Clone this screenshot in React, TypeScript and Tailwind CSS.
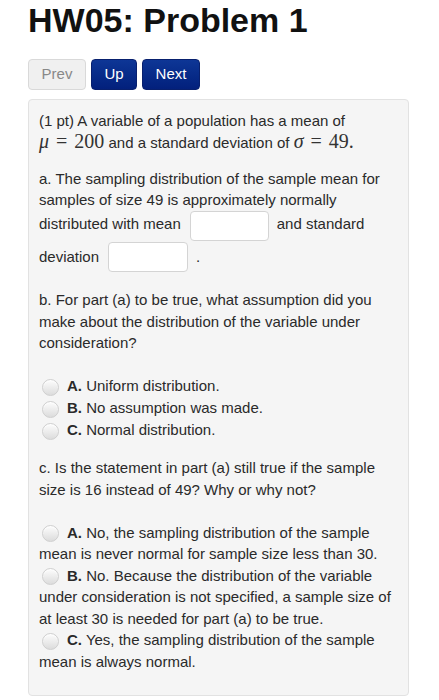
import React from "react";

const Radio = () => (
  <span className="inline-block w-[17px] h-[17px] rounded-full align-middle ml-[3px] mr-[8px] border border-[#cfcfcf] bg-gradient-to-b from-[#fdfdfd] to-[#dcdcdc] shadow-[inset_0_1px_1px_rgba(255,255,255,0.9)]" />
);

const Box = ({ w }: { w: string }) => (
  <div className={`${w} h-[30px] shrink-0 rounded-[4px] border border-[#d4d4d4] bg-white`} />
);

export default function App() {
  const math = "font-['Liberation_Serif',serif] text-[20px] leading-[0px] text-[#333]";
  return (
    <div className="bg-white min-h-[700px] pl-[28px] pr-[30px] pt-[1px] font-['Liberation_Sans',Arial,sans-serif]">
      <h1 className="text-[34px] leading-[38px] font-bold text-[#111]">HW05: Problem 1</h1>
      <div className="mt-[20px] flex gap-[5px]">
        <button className="h-[31px] w-[58px] rounded-[4px] border border-[#d9d9d9] bg-[#f0f0f0] text-[15px] text-[#888]">Prev</button>
        <button className="h-[31px] w-[46px] rounded-[4px] border border-[#08206e] bg-gradient-to-b from-[#0e3696] to-[#03207c] text-[15px] text-white">Up</button>
        <button className="h-[31px] w-[58px] rounded-[4px] border border-[#08206e] bg-gradient-to-b from-[#0e3696] to-[#03207c] text-[15px] text-white">Next</button>
      </div>
      <div className="mt-[9px] w-[381px] rounded-[4px] border border-[#e2e2e2] bg-[#f5f5f5] pl-[10px] pr-[6px] pt-[10px] pb-[23px] text-[15px] leading-[21.5px] text-[#2a2a2a] whitespace-nowrap">
        <p>
          (1 pt) A variable of a population has a mean of
          <br />
          <span className={math}>
            <i>μ</i>
            <span className="mx-[7px]">=</span>200
          </span>{" "}
          and a standard deviation of{" "}
          <span className={math}>
            <i>σ</i>
            <span className="mx-[7px]">=</span>49.
          </span>
        </p>

        <div className="mt-[14.5px]">
          <p>
            a. The sampling distribution of the sample mean for
            <br />
            samples of size 49 is approximately normally
          </p>
          <div className="flex items-start h-[31px]">
            <span className="mt-[2.5px]">distributed with mean</span>
            <div className="ml-[9px] mt-[0.5px]">
              <Box w="w-[79px]" />
            </div>
            <span className="mt-[2.5px] ml-[8px]">and standard</span>
          </div>
          <div className="flex items-start h-[31px]">
            <span className="mt-[4.5px]">deviation</span>
            <div className="ml-[9px] mt-[0.5px]">
              <Box w="w-[80px]" />
            </div>
            <span className="mt-[4.5px] ml-[8px]">.</span>
          </div>
        </div>

        <p className="mt-[16.5px]">
          b. For part (a) to be true, what assumption did you
          <br />
          make about the distribution of the variable under
          <br />
          consideration?
        </p>

        <div className="mt-[21.5px]">
          <div className="leading-[22px]">
            <Radio />
            <b>A.</b> Uniform distribution.
          </div>
          <div className="leading-[22px]">
            <Radio />
            <b>B.</b> No assumption was made.
          </div>
          <div className="leading-[22px]">
            <Radio />
            <b>C.</b> Normal distribution.
          </div>
        </div>

        <p className="mt-[16px]">
          c. Is the statement in part (a) still true if the sample
          <br />
          size is 16 instead of 49? Why or why not?
        </p>

        <div className="mt-[21.5px]">
          <div>
            <Radio />
            <b>A.</b> No, the sampling distribution of the sample
            <br />
            mean is never normal for sample size less than 30.
          </div>
          <div>
            <Radio />
            <b>B.</b> No. Because the distribution of the variable
            <br />
            under consideration is not specified, a sample size of
            <br />
            at least 30 is needed for part (a) to be true.
          </div>
          <div>
            <Radio />
            <b>C.</b> Yes, the sampling distribution of the sample
            <br />
            mean is always normal.
          </div>
        </div>
      </div>
    </div>
  );
}
